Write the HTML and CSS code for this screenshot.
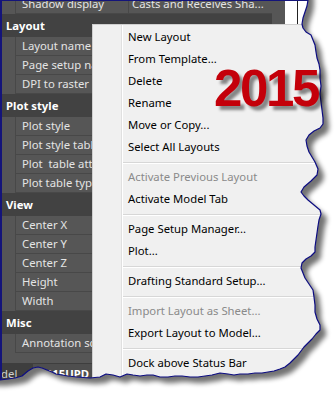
FILE: index.html
```html
<!DOCTYPE html>
<html>
<head>
<meta charset="utf-8">
<link rel="stylesheet" href="styles.css">
</head>
<body>
<div class="screen">
  <div class="frame">
    <div class="palette">
      <div class="rows">
        <div class="row"><span class="gut"></span><span class="name">Shadow display</span><span class="val">Casts and Receives Sha...</span></div>
        <div class="cat">Layout</div>
        <div class="row"><span class="gut"></span><span class="name">Layout name</span><span class="val"></span></div>
        <div class="row"><span class="gut"></span><span class="name">Page setup name</span><span class="val"></span></div>
        <div class="row"><span class="gut"></span><span class="name">DPI to raster</span><span class="val"></span></div>
        <div class="cat">Plot style</div>
        <div class="row"><span class="gut"></span><span class="name">Plot style</span><span class="val"></span></div>
        <div class="row"><span class="gut"></span><span class="name">Plot style table</span><span class="val"></span></div>
        <div class="row"><span class="gut"></span><span class="name">Plot&nbsp; table attached to</span><span class="val"></span></div>
        <div class="row"><span class="gut"></span><span class="name">Plot table type</span><span class="val"></span></div>
        <div class="cat">View</div>
        <div class="row"><span class="gut"></span><span class="name">Center X</span><span class="val"></span></div>
        <div class="row"><span class="gut"></span><span class="name">Center Y</span><span class="val"></span></div>
        <div class="row"><span class="gut"></span><span class="name">Center Z</span><span class="val"></span></div>
        <div class="row"><span class="gut"></span><span class="name">Height</span><span class="val"></span></div>
        <div class="row"><span class="gut"></span><span class="name">Width</span><span class="val"></span></div>
        <div class="cat">Misc</div>
        <div class="row"><span class="gut"></span><span class="name">Annotation scale</span><span class="val"></span></div>
      </div>
      <div class="fill"></div>
      <div class="tabs"><span class="tab model">Model</span><span class="tab cur">2015UPD</span></div>
    </div>
    <div class="side"></div>
  </div>

  <div class="menu">
    <div class="item">New Layout</div>
    <div class="item">From Template...</div>
    <div class="item">Delete</div>
    <div class="item">Rename</div>
    <div class="item">Move or Copy...</div>
    <div class="item">Select All Layouts</div>
    <div class="sep"></div>
    <div class="item dis">Activate Previous Layout</div>
    <div class="item">Activate Model Tab</div>
    <div class="sep"></div>
    <div class="item">Page Setup Manager...</div>
    <div class="item">Plot...</div>
    <div class="sep"></div>
    <div class="item">Drafting Standard Setup...</div>
    <div class="sep"></div>
    <div class="item dis">Import Layout as Sheet...</div>
    <div class="item">Export Layout to Model...</div>
    <div class="sep"></div>
    <div class="item">Dock above Status Bar</div>
  </div>

  <svg class="tear" width="336" height="393" viewBox="0 0 336 393">
    <defs>
      <clipPath id="outside">
        <path d="M308,0 L307,6 305,12 303,18 302,24 303,28 306,32 311,35 313,40 315,45 316,52 317,58 319,64 320,70 320,78 321,86 320,94 321,102 322,110 323,118 323,124 320,128 314,131 309,135 306,140 307,146 309,152 312,157 315,162 318,169 317,175 311,181 304,187 301,192 304,196 308,200 314,205 320,210 321,214 319,220 318,226 317,233 316,240 315,247 315,252 311,256 306,259 302,263 301,268 303,273 305,278 309,284 313,290 314,297 315,305 315,312 317,319 320,325 320,330 316,334 312,339 308,343 304,347 301,351 298,355 294,359 290,363 285,367 280,369 274,371 268,372 262,373 255,373 248,374 240,374 234,375 228,374 220,373 212,375 205,376 198,377 190,377 182,376 175,376 168,377 160,377 153,375 147,375 140,376 133,375 127,374 120,377 113,375 106,374 100,377 90,378 77,377 68,376 62,375 56,374 52,372 47,370 42,368 38,367 33,368 28,371 22,376 15,378 8,379 0,380 L0,393 L336,393 L336,0 Z"/>
      </clipPath>
      <filter id="soft" x="-20%" y="-20%" width="140%" height="140%">
        <feGaussianBlur stdDeviation="2.6"/>
      </filter>
    </defs>
    <path fill="#ffffff" d="M308,0 L307,6 305,12 303,18 302,24 303,28 306,32 311,35 313,40 315,45 316,52 317,58 319,64 320,70 320,78 321,86 320,94 321,102 322,110 323,118 323,124 320,128 314,131 309,135 306,140 307,146 309,152 312,157 315,162 318,169 317,175 311,181 304,187 301,192 304,196 308,200 314,205 320,210 321,214 319,220 318,226 317,233 316,240 315,247 315,252 311,256 306,259 302,263 301,268 303,273 305,278 309,284 313,290 314,297 315,305 315,312 317,319 320,325 320,330 316,334 312,339 308,343 304,347 301,351 298,355 294,359 290,363 285,367 280,369 274,371 268,372 262,373 255,373 248,374 240,374 234,375 228,374 220,373 212,375 205,376 198,377 190,377 182,376 175,376 168,377 160,377 153,375 147,375 140,376 133,375 127,374 120,377 113,375 106,374 100,377 90,378 77,377 68,376 62,375 56,374 52,372 47,370 42,368 38,367 33,368 28,371 22,376 15,378 8,379 0,380 L0,393 L336,393 L336,0 Z"/>
    <g clip-path="url(#outside)">
      <path fill="#000" opacity="0.55" filter="url(#soft)" transform="translate(6,6)" d="M-20,-20 L308,-20 L308,0 L307,6 305,12 303,18 302,24 303,28 306,32 311,35 313,40 315,45 316,52 317,58 319,64 320,70 320,78 321,86 320,94 321,102 322,110 323,118 323,124 320,128 314,131 309,135 306,140 307,146 309,152 312,157 315,162 318,169 317,175 311,181 304,187 301,192 304,196 308,200 314,205 320,210 321,214 319,220 318,226 317,233 316,240 315,247 315,252 311,256 306,259 302,263 301,268 303,273 305,278 309,284 313,290 314,297 315,305 315,312 317,319 320,325 320,330 316,334 312,339 308,343 304,347 301,351 298,355 294,359 290,363 285,367 280,369 274,371 268,372 262,373 255,373 248,374 240,374 234,375 228,374 220,373 212,375 205,376 198,377 190,377 182,376 175,376 168,377 160,377 153,375 147,375 140,376 133,375 127,374 120,377 113,375 106,374 100,377 90,378 77,377 68,376 62,375 56,374 52,372 47,370 42,368 38,367 33,368 28,371 22,376 15,378 8,379 0,380 L-20,380 Z"/>
    </g>
    <path fill="none" stroke="#0c0c82" stroke-width="1.2" stroke-linejoin="round" d="M308,0 L307,6 305,12 303,18 302,24 303,28 306,32 311,35 313,40 315,45 316,52 317,58 319,64 320,70 320,78 321,86 320,94 321,102 322,110 323,118 323,124 320,128 314,131 309,135 306,140 307,146 309,152 312,157 315,162 318,169 317,175 311,181 304,187 301,192 304,196 308,200 314,205 320,210 321,214 319,220 318,226 317,233 316,240 315,247 315,252 311,256 306,259 302,263 301,268 303,273 305,278 309,284 313,290 314,297 315,305 315,312 317,319 320,325 320,330 316,334 312,339 308,343 304,347 301,351 298,355 294,359 290,363 285,367 280,369 274,371 268,372 262,373 255,373 248,374 240,374 234,375 228,374 220,373 212,375 205,376 198,377 190,377 182,376 175,376 168,377 160,377 153,375 147,375 140,376 133,375 127,374 120,377 113,375 106,374 100,377 90,378 77,377 68,376 62,375 56,374 52,372 47,370 42,368 38,367 33,368 28,371 22,376 15,378 8,379 0,380"/>
  </svg>

  <div class="year">2015</div>
</div>
</body>
</html>
```

FILE: styles.css
```css
html, body {
  margin: 0;
  padding: 0;
  background: #ffffff;
}

.screen {
  position: relative;
  width: 336px;
  height: 393px;
  overflow: hidden;
  background: #ffffff;
  font-family: "Noto Sans", "DejaVu Sans", sans-serif;
  font-size: 11.3px;
}

.frame {
  display: flex;
  width: 334px;
  height: 392px;
  border-top: 1px solid #14147a;
  border-left: 2px solid #14147a;
}

.palette {
  width: 283px;
  flex: none;
  display: flex;
  flex-direction: column;
  background: #565656;
  overflow: hidden;
}

.rows {
  margin-top: -6px;
  margin-right: 13px;
}

.row {
  display: flex;
  height: 19px;
  line-height: 18px;
  color: #e4e4e4;
}

.gut {
  width: 13px;
  flex: none;
  border-right: 1px solid #484848;
}

.name {
  width: 106px;
  flex: none;
  padding-left: 6px;
  border-right: 1px solid #484848;
  border-bottom: 1px solid #484848;
  white-space: nowrap;
  overflow: hidden;
}

.val {
  flex: 1;
  padding-left: 3px;
  border-bottom: 1px solid #484848;
  white-space: nowrap;
  overflow: hidden;
}

.cat {
  height: 23px;
  line-height: 23px;
  padding-left: 4px;
  background: #424242;
  color: #ffffff;
  font-weight: bold;
}

.fill {
  flex: 1;
}

.tabs {
  height: 30px;
  flex: none;
  display: flex;
  align-items: flex-start;
  padding-top: 1px;
  box-sizing: border-box;
  background: #3e3e3e;
}

.tab {
  height: 20px;
  line-height: 20px;
  padding: 0 6px;
  color: #cfcfcf;
  white-space: nowrap;
}

.model {
  margin-left: -24px;
}

.cur {
  margin-left: 10px;
  background: #4e4e4e;
  color: #ffffff;
  font-weight: bold;
}

.side {
  width: 12px;
  flex: none;
  background: #ffffff;
  border-right: 1px solid #222222;
}

.menu {
  position: absolute;
  left: 92px;
  top: 24px;
  width: 250px;
  height: 380px;
  box-sizing: border-box;
  border: 1px solid #cfcfcf;
  padding: 1px 2px;
  background-color: #f0f0f0;
  background-image: linear-gradient(to right, transparent 28px, #e0e0e0 28px, #e0e0e0 29px, #ffffff 29px, #ffffff 30px, transparent 30px);
}

.item {
  height: 22px;
  line-height: 22px;
  padding-left: 33px;
  color: #000000;
  white-space: nowrap;
}

.item.dis {
  color: #8a8a8a;
}

.sep {
  height: 0;
  margin: 4px 0 2px 28px;
  border-top: 1px solid #d7d7d7;
  border-bottom: 1px solid #ffffff;
}

.tear {
  position: absolute;
  left: 0;
  top: 0;
}

.year {
  position: absolute;
  left: 214px;
  top: 63px;
  font-family: "Liberation Sans", Arial, sans-serif;
  font-weight: bold;
  font-size: 51px;
  line-height: 1;
  letter-spacing: -2.4px;
  color: #c4000a;
  text-shadow: 4px 4px 3px rgba(0, 0, 0, 0.45);
}
```
